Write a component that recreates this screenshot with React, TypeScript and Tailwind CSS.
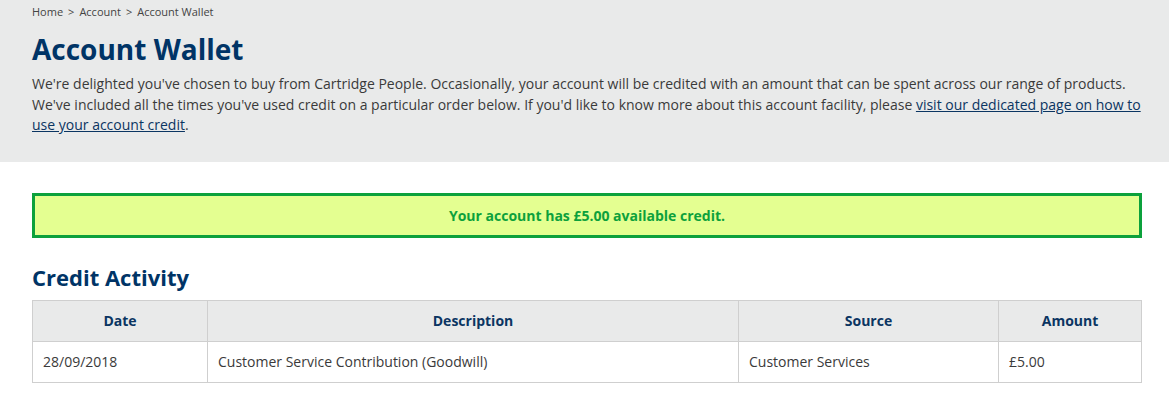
const rows = [
  {
    date: "28/09/2018",
    description: "Customer Service Contribution (Goodwill)",
    source: "Customer Services",
    amount: "£5.00",
  },
];

export default function App() {
  return (
    <div className="min-h-[400px] bg-white font-['Open_Sans',sans-serif] text-[#333]">
      <div className="bg-[#e9eaea] px-8 pt-[5px] pb-[26px]">
        <nav className="text-[11px] leading-[14px] text-[#444]">
          Home<span className="mx-[5px]">&gt;</span>Account<span className="mx-[5px]">&gt;</span>Account Wallet
        </nav>
        <h1 className="mt-[12px] text-[28px] font-bold leading-[36px] text-[#003466]">
          Account Wallet
        </h1>
        <p className="mt-[7px] w-[1110px] text-[14px] leading-[20.5px] text-[#3a3a3a]">
          We're delighted you've chosen to buy from Cartridge People. Occasionally, your account will be credited with an amount that can be spent across our range of products. We've included all the times you've used credit on a particular order below. If you'd like to know more about this account facility, please{" "}
          <a href="#" className="text-[#0b3562] underline">
            visit our dedicated page on how to use your account credit
          </a>
          .
        </p>
      </div>

      <div className="px-8 pt-[31px]">
        <div className="flex h-[45px] w-[1110px] items-center justify-center border-[3px] border-[#0ca13c] bg-[#e4ff91] text-[14px] font-bold text-[#0ca13c]">
          Your account has £5.00 available credit.
        </div>

        <h2 className="mt-[24px] text-[22px] font-bold leading-[30px] text-[#003466]">
          Credit Activity
        </h2>

        <table className="mt-[8px] w-[1110px] border-collapse text-[14px]">
          <thead>
            <tr className="bg-[#e9eaea] text-[#0b3562]">
              <th className="h-[41px] w-[175px] border border-[#cfcfcf] font-bold">Date</th>
              <th className="h-[41px] w-[531px] border border-[#cfcfcf] font-bold">Description</th>
              <th className="h-[41px] w-[260px] border border-[#cfcfcf] font-bold">Source</th>
              <th className="h-[41px] border border-[#cfcfcf] font-bold">Amount</th>
            </tr>
          </thead>
          <tbody>
            {rows.map((row) => (
              <tr key={row.date} className="text-[#3a3a3a]">
                <td className="h-[41px] border border-[#cfcfcf] px-[10px]">{row.date}</td>
                <td className="h-[41px] border border-[#cfcfcf] px-[10px]">{row.description}</td>
                <td className="h-[41px] border border-[#cfcfcf] px-[10px]">{row.source}</td>
                <td className="h-[41px] border border-[#cfcfcf] px-[10px]">{row.amount}</td>
              </tr>
            ))}
          </tbody>
        </table>
      </div>
    </div>
  );
}
